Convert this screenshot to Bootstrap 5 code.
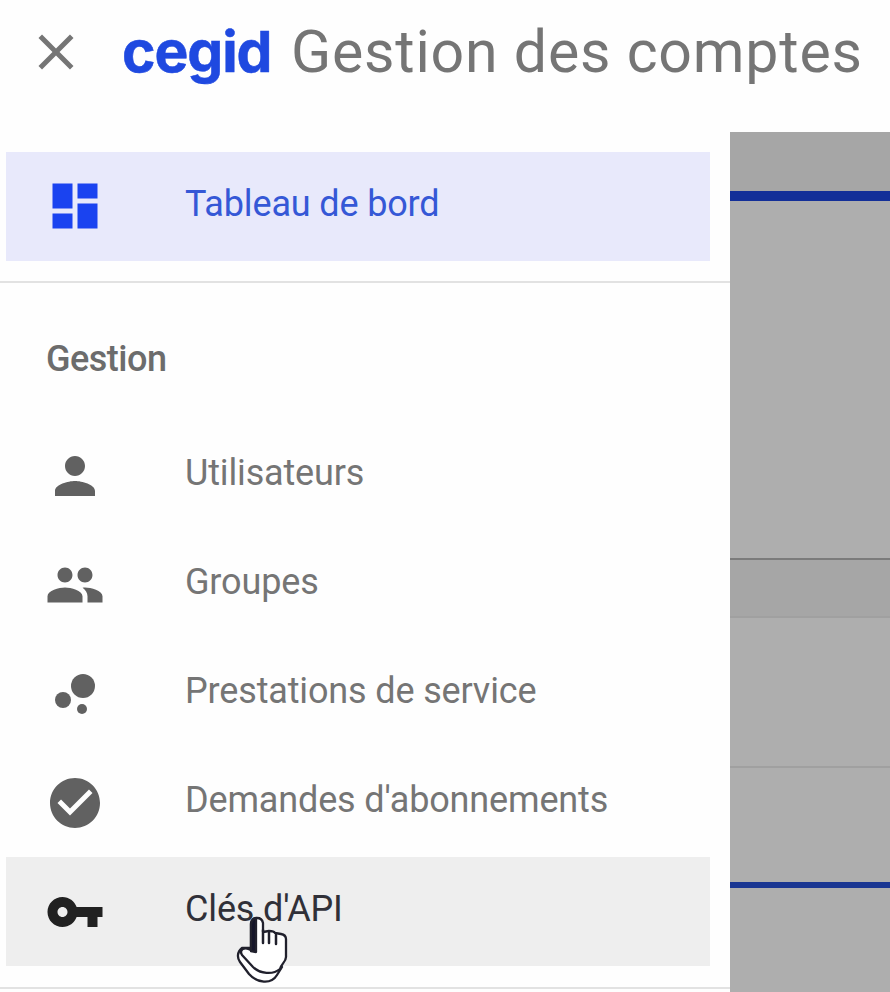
<!DOCTYPE html>
<html lang="fr">
<head>
<meta charset="utf-8">
<meta name="viewport" content="width=device-width, initial-scale=1">
<title>cegid Gestion des comptes</title>
<link rel="stylesheet" href="https://cdn.jsdelivr.net/npm/bootstrap@5.3.0/dist/css/bootstrap.min.css">
<style>
body { font-family: Roboto, "Liberation Sans", sans-serif; background: #fefefe; height: 992px; color: #727272; }
.topbar { height: 132px; padding: 0 0 28px 26px; }
.close-btn { width: 60px; height: 60px; line-height: 0; color: #757575; }
.brand { font-family: Inter, sans-serif; font-weight: 700; font-size: 57px; line-height: 60px; letter-spacing: -1.1px; color: #1f49e0; margin-left: 36px; width: 169px; -webkit-text-stroke: .5px #1f49e0; }
.app-title { font-size: 59px; line-height: 60px; letter-spacing: .8px; color: #757575; }
.drawer { width: 730px; padding-top: 20px; }
.menu-item { height: 109px; margin: 0 20px 0 6px; padding: 0 0 0 39px; font-size: 36px; line-height: 44px; letter-spacing: -.15px; color: #757575; }
.menu-item svg { width: 60px; height: 60px; margin-right: 80px; color: #616161; }
.menu-item span { margin-top: -5px; }
.menu-item.current { background: #e8e9fb; color: #3558d6; margin-bottom: 20px; }
.menu-item.current svg { color: #1a43f0; margin-bottom: 1px; }
.menu-item.hovered { background: #eee; color: #303038; margin-bottom: 21px; }
.menu-item.hovered svg { color: #212121; }
.rule { height: 2px; background: #e2e2e2; }
.group-label { height: 138px; padding: 54px 0 0 46px; font-size: 36px; line-height: 44px; font-weight: 500; letter-spacing: -.5px; color: #6c6c6c; }
.backdrop-page { background: #aeaeae; }
.band { background: #a6a6a6; }
.b1 { height: 59px; } .blue1 { height: 10px; background: #132f98; }
.p1 { height: 357px; } .dark-line { height: 2px; background: #7b7b7b; }
.b2 { height: 56px; } .thin { height: 2px; background: #a0a0a0; }
.p2 { height: 148px; } .p3 { height: 114px; } .blue2 { height: 6px; background: #1a3692; }
.pointer { left: 236px; top: 914px; }
</style>
</head>
<body class="d-flex flex-column overflow-hidden position-relative">
<header class="topbar d-flex align-items-center flex-shrink-0">
  <button class="close-btn btn p-0 border-0" aria-label="Fermer"><svg width="60" height="60" viewBox="0 0 24 24" fill="currentColor"><path d="M19 6.41 17.59 5 12 10.59 6.41 5 5 6.41 10.59 12 5 17.59 6.41 19 12 13.41 17.59 19 19 17.59 13.41 12z"/></svg></button>
  <div class="brand text-nowrap">cegid</div>
  <div class="app-title text-nowrap">Gestion des comptes</div>
</header>
<div class="d-flex flex-grow-1">
  <nav class="drawer flex-shrink-0 d-flex flex-column">
    <a class="menu-item current d-flex align-items-center text-decoration-none" href="#"><svg viewBox="0 0 24 24" fill="currentColor"><path d="M3 13h8V3H3v10zm0 8h8v-6H3v6zm10 0h8V11h-8v10zm0-18v6h8V3h-8z"/></svg><span>Tableau de bord</span></a>
    <div class="rule"></div>
    <div class="group-label">Gestion</div>
    <a class="menu-item d-flex align-items-center text-decoration-none" href="#"><svg viewBox="0 0 24 24" fill="currentColor"><path d="M12 12c2.21 0 4-1.79 4-4s-1.79-4-4-4-4 1.79-4 4 1.79 4 4 4zm0 2c-2.67 0-8 1.34-8 4v2h16v-2c0-2.66-5.33-4-8-4z"/></svg><span>Utilisateurs</span></a>
    <a class="menu-item d-flex align-items-center text-decoration-none" href="#"><svg viewBox="0 0 24 24" fill="currentColor"><path d="M16 11c1.66 0 2.99-1.34 2.99-3S17.66 5 16 5s-3 1.34-3 3 1.34 3 3 3zm-8 0c1.66 0 2.99-1.34 2.99-3S9.66 5 8 5 5 6.34 5 8s1.34 3 3 3zm0 2c-2.33 0-7 1.17-7 3.5V19h14v-2.500C15 14.170 10.330 13 8 13zm8 0c-.29 0-.62.02-.97.05 1.160.84 1.970 1.970 1.970 3.450V19h6v-2.500c0-2.330-4.670-3.500-7-3.500z"/></svg><span>Groupes</span></a>
    <a class="menu-item d-flex align-items-center text-decoration-none" href="#"><svg viewBox="0 0 24 24" fill="currentColor"><circle cx="7.200" cy="14.400" r="3.200"/><circle cx="14.800" cy="18" r="2"/><circle cx="15.200" cy="8.800" r="4.800"/></svg><span>Prestations de service</span></a>
    <a class="menu-item d-flex align-items-center text-decoration-none" href="#"><svg viewBox="0 0 24 24" fill="currentColor"><path d="M12 2C6.480 2 2 6.480 2 12s4.480 10 10 10 10-4.480 10-10S17.520 2 12 2zm-2 15-5-5 1.410-1.410L10 14.170l7.590-7.590L19 8l-9 9z"/></svg><span>Demandes d'abonnements</span></a>
    <a class="menu-item hovered d-flex align-items-center text-decoration-none" href="#"><svg viewBox="0 0 24 24" fill="currentColor"><path d="M12.650 10C11.830 7.670 9.610 6 7 6c-3.310 0-6 2.690-6 6s2.690 6 6 6c2.610 0 4.830-1.670 5.650-4H17v4h4v-4h2v-4H12.650zM7 14c-1.100 0-2-.9-2-2s.9-2 2-2 2 .9 2 2-.9 2-2 2z"/></svg><span>Clés d'API</span></a>
    <div class="rule"></div>
  </nav>
  <div class="backdrop-page flex-grow-1 d-flex flex-column">
    <div class="band b1"></div><div class="blue1"></div><div class="p1"></div><div class="dark-line"></div>
    <div class="band b2"></div><div class="thin"></div><div class="p2"></div><div class="thin"></div><div class="p3"></div><div class="blue2"></div>
  </div>
</div>
<svg class="pointer position-absolute" width="54" height="72" viewBox="0 0 54 72" fill="none" stroke="#20202c" stroke-width="2.300" stroke-linejoin="round" stroke-linecap="round">
  <path fill="#fff" d="M6 34C1 38 1 44 4 48L13 60C21 69 35 71 41 61L46 53 14 34Z"/>
  <path fill="#fff" d="M15 37V9Q16 4 21 4T27 9V18L33 17Q38 17 39 19L45 20Q50 21 50 25V43C50 48 45 50 44 55 37 61 24 60 17 53L6 41C3 36 8 32 15 36Z"/>
  <path fill="#15152a" d="M15 37V10Q16 4 20 4V38Z"/>
  <path d="M27 16V29M33 19V29M40 21V30" stroke-width="2.500"/>
</svg>
<script src="https://cdn.jsdelivr.net/npm/bootstrap@5.3.0/dist/js/bootstrap.bundle.min.js"></script>
</body>
</html>
